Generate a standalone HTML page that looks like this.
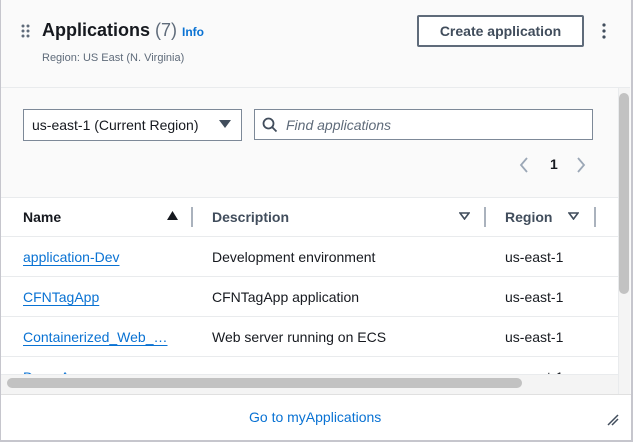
<!DOCTYPE html>
<html><head><style>
*{box-sizing:border-box;margin:0;padding:0}
body{width:633px;height:442px;background:#fff;font-family:"Liberation Sans",Arial,sans-serif;overflow:hidden;position:relative;color:#16191f}
.card{position:absolute;left:0;top:0;width:632px;height:441px;border:1px solid #c6c6cd;border-top:none;background:#fafafa;overflow:hidden}
.a{position:absolute}
.lnk{color:#0972d3;text-decoration:underline;text-underline-offset:3px;font-size:14px}
.t{font-size:14px;color:#16191f}
.hr{position:absolute;left:0;width:617px;height:1px;background:#e9ebed}
.div{position:absolute;width:2px;height:20px;background:#aab2bd;top:207px}
</style></head><body>
<div class="card">
 <svg class="a" style="left:20px;top:24px" width="10" height="14"><g fill="#5f6b7a"><circle cx="2" cy="2" r="1.5"/><circle cx="7" cy="2" r="1.5"/><circle cx="2" cy="7" r="1.5"/><circle cx="7" cy="7" r="1.5"/><circle cx="2" cy="12" r="1.5"/><circle cx="7" cy="12" r="1.5"/></g></svg>
 <div class="a" style="left:41px;top:20px;font-size:18px;font-weight:bold;color:#16191f">Applications <span style="font-weight:normal;color:#5f6b7a">(7)</span></div>
 <div class="a" style="left:181px;top:25px;font-size:12px;font-weight:bold;color:#0972d3">Info</div>
 <div class="a" style="left:41px;top:52px;font-size:11px;color:#5f6b7a">Region: US East (N. Virginia)</div>
 <div class="a" style="left:416px;top:15px;width:167px;height:32px;border:2px solid #5f6b7a;border-radius:2px;background:#fff;text-align:center;line-height:28px;font-size:14px;font-weight:bold;color:#414d5c">Create application</div>
 <svg class="a" style="left:600px;top:23px" width="6" height="16"><g fill="#414d5c"><circle cx="3" cy="2" r="1.6"/><circle cx="3" cy="8" r="1.6"/><circle cx="3" cy="14" r="1.6"/></g></svg>
 <div class="a" style="left:0;top:87px;width:629px;height:1px;background:#e9ebed"></div>
 <div class="a" style="left:22px;top:109px;width:219px;height:32px;border:1px solid #7d8998;background:#fff;font-size:14px;line-height:30px;padding-left:8px">us-east-1 (Current Region)</div>
 <svg class="a" style="left:218px;top:120px" width="12" height="9"><path d="M0 0H12L6 8Z" fill="#414d5c"/></svg>
 <div class="a" style="left:253px;top:109px;width:339px;height:31px;border:1px solid #7d8998;background:#fff"></div>
 <svg class="a" style="left:261px;top:117px" width="16" height="16"><circle cx="6.5" cy="6.5" r="5" fill="none" stroke="#414d5c" stroke-width="1.8"/><path d="M10 10L14.5 14.5" stroke="#414d5c" stroke-width="1.8"/></svg>
 <div class="a" style="left:285px;top:117px;font-size:14px;font-style:italic;color:#5f6b7a">Find applications</div>
 <svg class="a" style="left:518px;top:157px" width="10" height="16"><path d="M8 1L2 8L8 15" fill="none" stroke="#9ba7b6" stroke-width="1.8"/></svg>
 <div class="a" style="left:549px;top:156px;font-size:14px;font-weight:bold">1</div>
 <svg class="a" style="left:575px;top:157px" width="10" height="16"><path d="M2 1L8 8L2 15" fill="none" stroke="#9ba7b6" stroke-width="1.8"/></svg>
 <div class="a" style="left:0;top:197px;width:617px;height:180px;background:#fff"></div>
 <div class="hr" style="top:197px"></div>
 <div class="a" style="left:22px;top:209px;font-size:14px;font-weight:bold">Name</div>
 <svg class="a" style="left:166px;top:211px" width="11" height="9"><path d="M0 9H11L5.5 0Z" fill="#16191f"/></svg>
 <div class="div" style="left:190px"></div>
 <div class="a" style="left:211px;top:209px;font-size:14px;font-weight:bold;color:#414d5c">Description</div>
 <svg class="a" style="left:458px;top:212px" width="11" height="8"><path d="M1 1H10L5.5 7Z" fill="none" stroke="#414d5c" stroke-width="1.6"/></svg>
 <div class="div" style="left:483px"></div>
 <div class="a" style="left:504px;top:209px;font-size:14px;font-weight:bold;color:#414d5c">Region</div>
 <svg class="a" style="left:567px;top:212px" width="11" height="8"><path d="M1 1H10L5.5 7Z" fill="none" stroke="#414d5c" stroke-width="1.6"/></svg>
 <div class="div" style="left:593px"></div>
 <div class="hr" style="top:236px"></div>
 <div class="a lnk" style="left:22px;top:249px">application-Dev</div>
 <div class="a t" style="left:211px;top:249px">Development environment</div>
 <div class="a t" style="left:504px;top:249px">us-east-1</div>
 <div class="hr" style="top:276px"></div>
 <div class="a lnk" style="left:22px;top:289px">CFNTagApp</div>
 <div class="a t" style="left:211px;top:289px">CFNTagApp application</div>
 <div class="a t" style="left:504px;top:289px">us-east-1</div>
 <div class="hr" style="top:316px"></div>
 <div class="a lnk" style="left:22px;top:329px">Containerized_Web_…</div>
 <div class="a t" style="left:211px;top:329px">Web server running on ECS</div>
 <div class="a t" style="left:504px;top:329px">us-east-1</div>
 <div class="hr" style="top:356px"></div>
 <div class="a lnk" style="left:22px;top:369px">DemoApp</div>
 <div class="a t" style="left:504px;top:369px">us-east-1</div>
 <div class="a" style="left:0;top:374px;width:617px;height:20px;background:#f4f4f4;border-top:1px solid #e9ebed"></div>
 <div class="a" style="left:6px;top:378px;width:515px;height:10px;border-radius:5px;background:#c2c2c2"></div>
 <div class="a" style="left:617px;top:88px;width:12px;height:306px;background:#f4f4f4;border-left:1px solid #e9ebed"></div>
 <div class="a" style="left:618px;top:93px;width:10px;height:201px;border-radius:5px;background:#c2c2c2"></div>
 <div class="a" style="left:0;top:394px;width:631px;height:1px;background:#e0e0e0"></div>
 <div class="a" style="left:0;top:395px;width:631px;height:46px;background:#fff"></div>
 <div class="a" style="left:248px;top:409px;font-size:14px;color:#0972d3">Go to myApplications</div>
 <svg class="a" style="left:606px;top:414px" width="12" height="12"><path d="M1 11L11 1M5 11L11 5" stroke="#414d5c" stroke-width="1.5"/></svg>
</div>
<div class="a" style="left:0;top:0;width:633px;height:442px;border:1px solid #c6c6cd;border-top:none;pointer-events:none"></div>
</body></html>
